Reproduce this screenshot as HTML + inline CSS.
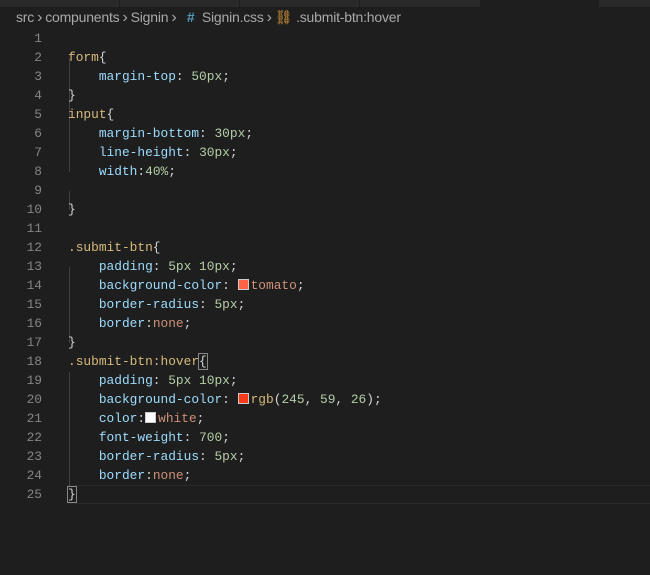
<!DOCTYPE html><html><head><style>
body{margin:0;width:650px;height:575px;background:#1e1e1e;overflow:hidden;position:relative;font-family:"Liberation Mono",monospace}
.tab{position:absolute;top:0;height:7px;background:#2a2a2a}
.bc{position:absolute;top:9px;left:16px;font:14px "Liberation Sans",sans-serif;color:#a9a9a9;white-space:nowrap;letter-spacing:-0.2px}
.bc i{font-style:normal;font-size:16px;margin:0 3px}
.ln{position:absolute;left:0;width:42px;text-align:right;color:#858585;font-size:12.85px;line-height:19px}
.code{position:absolute;left:68px;font-size:12.85px;line-height:19px;color:#d4d4d4;white-space:pre}
.s{color:#d7ba7d}.p{color:#9cdcfe}.n{color:#b5cea8}.k{color:#ce9178}
.sw{display:inline-block;width:9px;height:9px;border:1px solid #ccc;vertical-align:-1px;margin-right:2px}
</style></head><body>
<div class="tab" style="left:0;width:119px"></div><div class="tab" style="left:120px;width:119px"></div><div class="tab" style="left:240px;width:119px"></div><div class="tab" style="left:360px;width:120px"></div><div class="tab" style="left:599px;width:51px"></div>
<div class="bc">src<i>›</i>compunents<i>›</i>Signin<i>›</i> &nbsp;<span style="color:#519aba;font-weight:bold">#</span>&nbsp; Signin.css<i>›</i><span style="color:#e8a33d">⛓</span> .submit-btn:hover</div>
<div style="position:absolute;left:68px;right:0;top:485px;height:17px;border-top:1px solid #2a2a2a;border-bottom:1px solid #2a2a2a"></div>
<div style="position:absolute;left:69px;top:58px;width:1px;height:114px;background:#404040"></div>
<div style="position:absolute;left:69px;top:191px;width:1px;height:19px;background:#404040"></div>
<div style="position:absolute;left:69px;top:267px;width:1px;height:76px;background:#404040"></div>
<div style="position:absolute;left:69px;top:372px;width:1px;height:114px;background:#404040"></div>
<div class="ln" style="top:29px">1<br>2<br>3<br>4<br>5<br>6<br>7<br>8<br>9<br>10<br>11<br>12<br>13<br>14<br>15<br>16<br>17<br>18<br>19<br>20<br>21<br>22<br>23<br>24<br>25</div>
<div class="code" style="top:29px">
<span class="s">form</span>{
    <span class="p">margin-top</span>: <span class="n">50px</span>;
}
<span class="s">input</span>{
    <span class="p">margin-bottom</span>: <span class="n">30px</span>;
    <span class="p">line-height</span>: <span class="n">30px</span>;
    <span class="p">width</span>:<span class="n">40%</span>;

}

<span class="s">.submit-btn</span>{
    <span class="p">padding</span>: <span class="n">5px 10px</span>;
    <span class="p">background-color</span>: <span class="sw" style="background:tomato"></span><span class="k">tomato</span>;
    <span class="p">border-radius</span>: <span class="n">5px</span>;
    <span class="p">border</span>:<span class="k">none</span>;
}
<span class="s">.submit-btn:hover</span><span style="outline:1px solid #888">{</span>
    <span class="p">padding</span>: <span class="n">5px 10px</span>;
    <span class="p">background-color</span>: <span class="sw" style="background:rgb(245,59,26)"></span><span class="s">rgb</span>(<span class="n">245</span>, <span class="n">59</span>, <span class="n">26</span>);
    <span class="p">color</span>:<span class="sw" style="background:#fff"></span><span class="k">white</span>;
    <span class="p">font-weight</span>: <span class="n">700</span>;
    <span class="p">border-radius</span>: <span class="n">5px</span>;
    <span class="p">border</span>:<span class="k">none</span>;
<span style="outline:1px solid #888">}</span></div>
</body></html>
